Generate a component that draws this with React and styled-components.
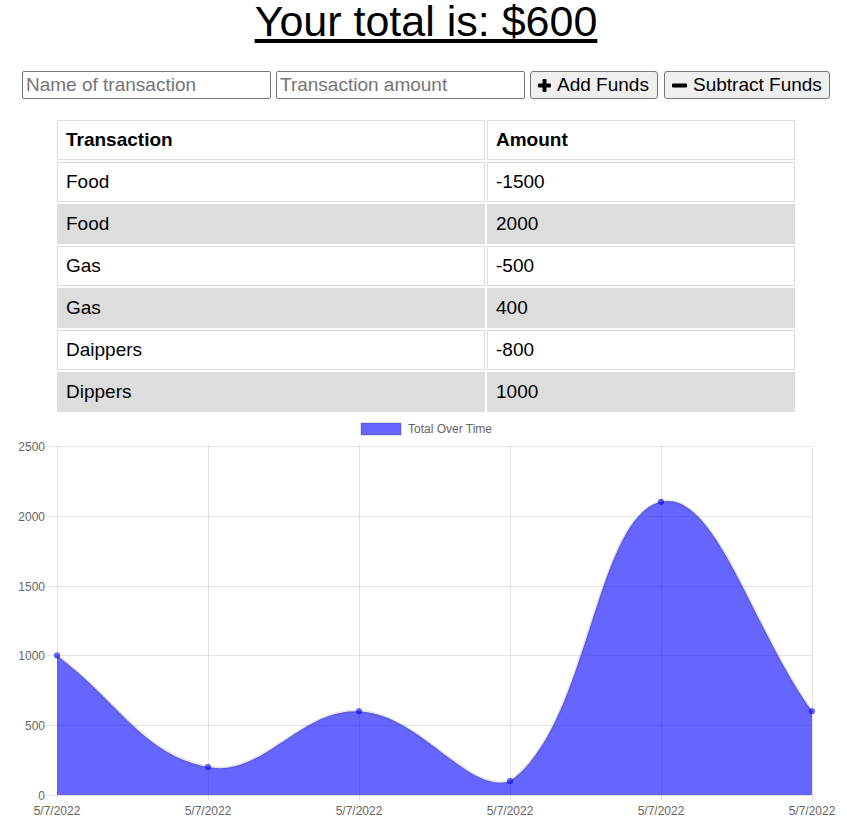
import React from "react";
import styled, { createGlobalStyle } from "styled-components";

const GlobalStyle = createGlobalStyle`
  body {
    margin: 0;
    background: #fff;
    font-family: "Liberation Sans", Arial, sans-serif;
    color: #000;
  }
`;

const Page = styled.div`
  width: 847px;
  display: flex;
  flex-direction: column;
  align-items: center;
`;

const Centered = styled.div`
  width: 100%;
  padding-left: 5px;
  box-sizing: border-box;
  display: flex;
  flex-direction: column;
  align-items: center;
`;

const Title = styled.h1`
  margin: 0;
  height: 42px;
  font-size: 43px;
  line-height: 42px;
  font-weight: normal;
  text-decoration: underline;
`;

const Form = styled.div`
  margin-top: 29px;
  display: flex;
  gap: 5px;
`;

const Input = styled.input`
  box-sizing: border-box;
  width: 249px;
  height: 28px;
  padding: 1px 3px;
  border: 1px solid #767676;
  border-radius: 2px;
  font-family: inherit;
  font-size: 19px;
  &::placeholder {
    color: #757575;
  }
`;

const Button = styled.button`
  box-sizing: border-box;
  width: ${(p) => p.$width}px;
  height: 28px;
  padding: 1px 7px;
  display: flex;
  align-items: center;
  gap: 6px;
  background: #efefef;
  border: 1px solid #767676;
  border-radius: 3px;
  font-family: inherit;
  font-size: 19px;
  color: #000;
  white-space: nowrap;
  & + & {
    margin-left: 1px;
  }
`;

const Table = styled.table`
  margin-top: 19px;
  width: 742px;
  border-spacing: 2px;
  font-size: 19px;
`;

const Cell = styled.td`
  height: 40px;
  box-sizing: border-box;
  padding: 0 8px;
  border: 1px solid #ddd;
  background: ${(p) => (p.$shade ? "#ddd" : "#fff")};
  font-weight: ${(p) => (p.$head ? "bold" : "normal")};
  width: ${(p) => (p.$first ? "428px" : "auto")};
  text-align: left;
  vertical-align: middle;
`;

const ChartSvg = styled.svg`
  display: block;
  font-family: "Liberation Sans", Arial, sans-serif;
`;

const PlusIcon = () => (
  <svg width="13" height="13" viewBox="0 0 13 13">
    <rect x="4.5" y="0" width="4" height="13" rx="1" fill="#000" />
    <rect x="0" y="4.5" width="13" height="4" rx="1" fill="#000" />
  </svg>
);

const MinusIcon = () => (
  <svg width="15" height="5" viewBox="0 0 15 5">
    <rect x="0" y="0.5" width="15" height="4" rx="1" fill="#000" />
  </svg>
);

const rows = [
  ["Food", "-1500"],
  ["Food", "2000"],
  ["Gas", "-500"],
  ["Gas", "400"],
  ["Daippers", "-800"],
  ["Dippers", "1000"],
];

const area = { left: 57, right: 812, top: 446, bottom: 795 };
const totals = [1000, 200, 600, 100, 2100, 600];
const yOf = (v) => area.bottom - (v / 2500) * (area.bottom - area.top);
const clamp = (v, lo, hi) => Math.max(lo, Math.min(hi, v));

const points = totals.map((v, i) => ({
  x: area.left + (i * (area.right - area.left)) / (totals.length - 1),
  y: yOf(v),
}));

// same spline as chart.js, tension 0.4, control points kept in the chart area
const controls = points.map((cur, i) => {
  const prev = points[i - 1] || cur;
  const next = points[i + 1] || cur;
  const d01 = Math.hypot(cur.x - prev.x, cur.y - prev.y);
  const d12 = Math.hypot(next.x - cur.x, next.y - cur.y);
  const sum = d01 + d12 || 1;
  const fa = 0.4 * (d01 / sum);
  const fb = 0.4 * (d12 / sum);
  const cap = (p) => ({
    x: clamp(p.x, area.left, area.right),
    y: clamp(p.y, area.top, area.bottom),
  });
  return {
    prev: cap({ x: cur.x - fa * (next.x - prev.x), y: cur.y - fa * (next.y - prev.y) }),
    next: cap({ x: cur.x + fb * (next.x - prev.x), y: cur.y + fb * (next.y - prev.y) }),
  };
});

let line = `M ${points[0].x} ${points[0].y}`;
for (let i = 1; i < points.length; i++) {
  const a = controls[i - 1].next;
  const b = controls[i].prev;
  line += ` C ${a.x} ${a.y} ${b.x} ${b.y} ${points[i].x} ${points[i].y}`;
}
const fill = `${line} L ${area.right} ${area.bottom} L ${area.left} ${area.bottom} Z`;

const yTicks = [2500, 2000, 1500, 1000, 500, 0];

const Chart = () => (
  <ChartSvg width="847" height="413" viewBox="0 414 847 413">
    <rect x="361" y="423" width="40" height="12" fill="rgba(0,0,255,0.6)" stroke="rgba(0,0,0,0.1)" strokeWidth="2" />
    <text x="408" y="433" fontSize="12" fill="#666">Total Over Time</text>

    {yTicks.map((t) => {
      const y = Math.round(yOf(t)) + 0.5;
      return (
        <g key={t}>
          <line x1="47" x2={area.right} y1={y} y2={y} stroke="rgba(0,0,0,0.1)" />
          <text x="45" y={y + 4} fontSize="12" fill="#666" textAnchor="end">{t}</text>
        </g>
      );
    })}
    {points.map((p, i) => {
      const x = Math.round(p.x) + 0.5;
      return (
        <g key={i}>
          <line x1={x} x2={x} y1={area.top} y2="800" stroke="rgba(0,0,0,0.1)" />
          <text x={p.x} y="815" fontSize="12" fill="#666" textAnchor="middle">5/7/2022</text>
        </g>
      );
    })}

    <path d={fill} fill="rgba(0,0,255,0.6)" />
    <path d={line} fill="none" stroke="rgba(0,0,0,0.1)" strokeWidth="3" />
    {points.map((p, i) => (
      <circle key={i} cx={p.x} cy={p.y} r="3" fill="rgba(0,0,255,0.6)" stroke="rgba(0,0,0,0.1)" />
    ))}
  </ChartSvg>
);

const App = () => {
  return (
    <>
      <GlobalStyle />
      <Page>
        <Centered>
          <Title>Your total is: $600</Title>
          <Form>
            <Input type="text" placeholder="Name of transaction" />
            <Input type="number" placeholder="Transaction amount" />
            <Button $width={128}>
              <PlusIcon />
              Add Funds
            </Button>
            <Button $width={166}>
              <MinusIcon />
              Subtract Funds
            </Button>
          </Form>
          <Table>
            <thead>
              <tr>
                <Cell as="th" $head $first>Transaction</Cell>
                <Cell as="th" $head>Amount</Cell>
              </tr>
            </thead>
            <tbody>
              {rows.map(([name, amount], i) => (
                <tr key={i}>
                  <Cell $first $shade={i % 2 === 1}>{name}</Cell>
                  <Cell $shade={i % 2 === 1}>{amount}</Cell>
                </tr>
              ))}
            </tbody>
          </Table>
        </Centered>
        <Chart />
      </Page>
    </>
  );
};

export default App;
